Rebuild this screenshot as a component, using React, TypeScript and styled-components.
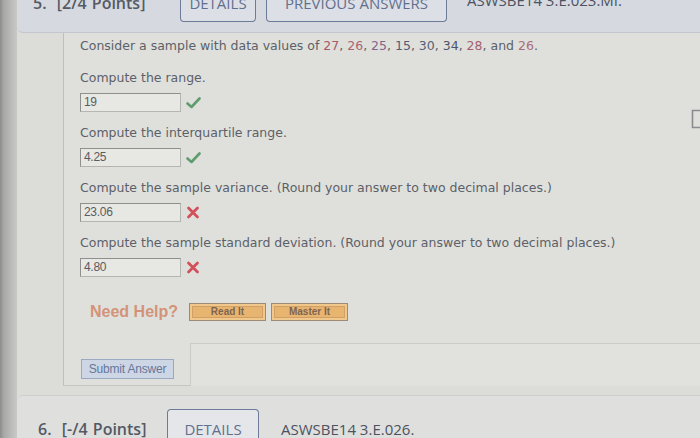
import React from "react";
import styled, { createGlobalStyle } from "styled-components";

const GlobalStyle = createGlobalStyle`
  html, body {
    margin: 0;
    padding: 0;
    background: #dcddd9;
    overflow: hidden;
  }
  body {
    font-family: "DejaVu Sans", Verdana, sans-serif;
  }
`;

const Page = styled.div`
  display: flex;
  width: 700px;
  height: 438px;
  overflow: hidden;
  position: relative;
`;

const LeftEdge = styled.div`
  width: 17px;
  flex: none;
  background: linear-gradient(to right, #8d8d8b 0px, #a9a9a7 4px, #bdbdbb 12px, #c9c9c6 17px);
`;

const Main = styled.div`
  flex: 1;
  display: flex;
  flex-direction: column;
  min-width: 0;
`;

const HeaderBar = styled.div<{ $top?: boolean }>`
  display: flex;
  align-items: flex-start;
  flex: none;
  box-sizing: border-box;
  height: ${(p) => (p.$top ? "48px" : "60px")};
  margin-top: ${(p) => (p.$top ? "-15px" : "9px")};
  padding-left: ${(p) => (p.$top ? "16px" : "21px")};
  padding-top: ${(p) => (p.$top ? "0" : "13px")};
  background: ${(p) => (p.$top ? "#d6d9df" : "#dfe0de")};
  border-bottom: ${(p) => (p.$top ? "1px solid #c3c6cc" : "none")};
  border-top: ${(p) => (p.$top ? "none" : "1px solid #cfd0ce")};
  border-radius: ${(p) => (p.$top ? "0 0 0 6px" : "6px 0 0 0")};
  font-family: "Open Sans", "DejaVu Sans", sans-serif;
  white-space: pre;
`;

const Points = styled.span<{ $top?: boolean }>`
  font-weight: 600;
  font-size: 16px;
  color: #545965;
  line-height: ${(p) => (p.$top ? "37px" : "40px")};
  width: ${(p) => (p.$top ? "147px" : "129px")};
  flex: none;
  word-spacing: 1px;
`;

const Tab = styled.span<{ $top?: boolean; $w: number }>`
  box-sizing: border-box;
  width: ${(p) => p.$w}px;
  height: ${(p) => (p.$top ? "37px" : "40px")};
  line-height: ${(p) => (p.$top ? "37px" : "38px")};
  margin-right: 10px;
  flex: none;
  text-align: center;
  font-size: 15px;
  color: #62708f;
  border: 1.5px solid #6d7b98;
  border-top: ${(p) => (p.$top ? "none" : "1.5px solid #6d7b98")};
  border-bottom: ${(p) => (p.$top ? "1.5px solid #6d7b98" : "none")};
  border-radius: ${(p) => (p.$top ? "0 0 4px 4px" : "4px 4px 0 0")};
  background: ${(p) => (p.$top ? "#dcdfe5" : "#e4e6ea")};
`;

const Code = styled.span<{ $top?: boolean }>`
  font-size: 15px;
  color: #4c525f;
  line-height: ${(p) => (p.$top ? "30px" : "40px")};
  margin-left: ${(p) => (p.$top ? "10px" : "12px")};
`;

const Panel = styled.div`
  margin-left: 46px;
  border-left: 1px solid #bfc0bc;
  display: flex;
  flex-direction: column;
  background: #dfe0dc;
`;

const Content = styled.div`
  padding: 5px 0 0 16px;
  color: #5c6068;
  font-size: 12.5px;
`;

const Line = styled.div`
  line-height: 16px;
  white-space: nowrap;
`;

const Num = styled.span<{ $c: string }>`
  color: ${(p) => p.$c};
`;

const Block = styled.div`
  margin-top: 16px;
  display: flex;
  flex-direction: column;
  gap: 7px;
  & + & {
    margin-top: 13px;
  }
`;

const AnswerRow = styled.div`
  display: flex;
  align-items: center;
  gap: 5px;
  height: 19px;
`;

const Input = styled.div`
  box-sizing: border-box;
  width: 101px;
  height: 19px;
  border: 1px solid #8f8f8d;
  border-right-color: #b5b5b2;
  border-bottom-color: #b5b5b2;
  background: #e7e7e3;
  padding-left: 3px;
  font-family: "Liberation Sans", Arial, sans-serif;
  font-size: 12px;
  line-height: 17px;
  color: #595c62;
  letter-spacing: -0.3px;
`;

const HelpRow = styled.div`
  display: flex;
  align-items: center;
  gap: 5px;
  margin: 26px 0 0 10px;
  height: 18px;
`;

const HelpLabel = styled.span`
  font-family: "Liberation Sans", Arial, sans-serif;
  font-weight: bold;
  font-size: 16px;
  color: #d39378;
  margin-right: 6px;
`;

const HelpButton = styled.span`
  box-sizing: border-box;
  width: 77px;
  height: 18px;
  border: 1px solid #9c8a76;
  box-shadow: inset 0 0 0 2px #f0c88c, inset 0 0 0 3px #d2a066;
  background: #e7b570;
  text-align: center;
  font-family: "Liberation Sans", Arial, sans-serif;
  font-weight: bold;
  font-size: 10px;
  line-height: 16px;
  color: #7f6450;
`;

const SubmitRow = styled.div`
  display: flex;
  margin-top: 22px;
  height: 43px;
`;

const SubmitCell = styled.div`
  width: 126px;
  flex: none;
  border-bottom: 1px solid #c4c5c1;
  padding: 15px 0 0 17px;
  box-sizing: border-box;
`;

const MessageCell = styled.div`
  flex: 1;
  border-top: 1px solid #cbccc8;
  border-left: 1px solid #cbccc8;
  background: #e1e2de;
`;

const SubmitButton = styled.span`
  display: inline-block;
  box-sizing: border-box;
  width: 93px;
  height: 20px;
  border: 1px solid #9aa8c1;
  background: #cdd6e5;
  text-align: center;
  font-family: "Liberation Sans", Arial, sans-serif;
  font-size: 12px;
  line-height: 18px;
  color: #66789a;
  letter-spacing: -0.2px;
`;

const SideTab = styled.div`
  position: absolute;
  right: -2px;
  top: 109px;
`;

const Check = () => (
  <svg width="15" height="12" viewBox="0 0 15 12">
    <path d="M1.5 6.5 L5.5 10 L13.5 1.5" fill="none" stroke="#5f9c6e" strokeWidth="2.6" strokeLinejoin="round" strokeLinecap="round" />
  </svg>
);

const Cross = () => (
  <svg width="14" height="13" viewBox="0 0 14 13">
    <path d="M2.5 2 L11.5 11 M11.5 2 L2.5 11" fill="none" stroke="#d2505c" strokeWidth="2.8" strokeLinecap="round" />
  </svg>
);

const questions = [
  { label: "Compute the range.", value: "19", ok: true },
  { label: "Compute the interquartile range.", value: "4.25", ok: true },
  {
    label: "Compute the sample variance. (Round your answer to two decimal places.)",
    value: "23.06",
    ok: false,
  },
  {
    label: "Compute the sample standard deviation. (Round your answer to two decimal places.)",
    value: "4.80",
    ok: false,
  },
];

const values: [string, string][] = [
  ["27", "#a65a66"],
  ["26", "#aa6472"],
  ["25", "#84648c"],
  ["15", "#535b76"],
  ["30", "#566079"],
  ["34", "#4d536a"],
  ["28", "#a45e6e"],
];

export default function App() {
  return (
    <>
      <GlobalStyle />
      <Page>
        <LeftEdge />
        <Main>
          <HeaderBar $top>
            <Points $top>5.  [2/4 Points]</Points>
            <Tab $top $w={76}>DETAILS</Tab>
            <Tab $top $w={181}>PREVIOUS ANSWERS</Tab>
            <Code $top>ASWSBE14 3.E.023.MI.</Code>
          </HeaderBar>
          <Panel>
            <Content>
              <Line>
                Consider a sample with data values of{" "}
                {values.map(([v, c]) => (
                  <React.Fragment key={v + c}>
                    <Num $c={c}>{v}</Num>,{" "}
                  </React.Fragment>
                ))}
                and <Num $c="#ab6c7a">26</Num>.
              </Line>
              {questions.map((q) => (
                <Block key={q.label}>
                  <Line>{q.label}</Line>
                  <AnswerRow>
                    <Input>{q.value}</Input>
                    {q.ok ? <Check /> : <Cross />}
                  </AnswerRow>
                </Block>
              ))}
              <HelpRow>
                <HelpLabel>Need Help?</HelpLabel>
                <HelpButton>Read It</HelpButton>
                <HelpButton>Master It</HelpButton>
              </HelpRow>
            </Content>
            <SubmitRow>
              <SubmitCell>
                <SubmitButton>Submit Answer</SubmitButton>
              </SubmitCell>
              <MessageCell />
            </SubmitRow>
          </Panel>
          <HeaderBar>
            <Points>6.  [-/4 Points]</Points>
            <Tab $w={92}>DETAILS</Tab>
            <Code>ASWSBE14 3.E.026.</Code>
          </HeaderBar>
        </Main>
        <SideTab>
          <svg width="12" height="20" viewBox="0 0 12 20">
            <path d="M12 1.5 H2.5 V18.5 H12" fill="none" stroke="#8a8c90" strokeWidth="1.6" />
          </svg>
        </SideTab>
      </Page>
    </>
  );
}
